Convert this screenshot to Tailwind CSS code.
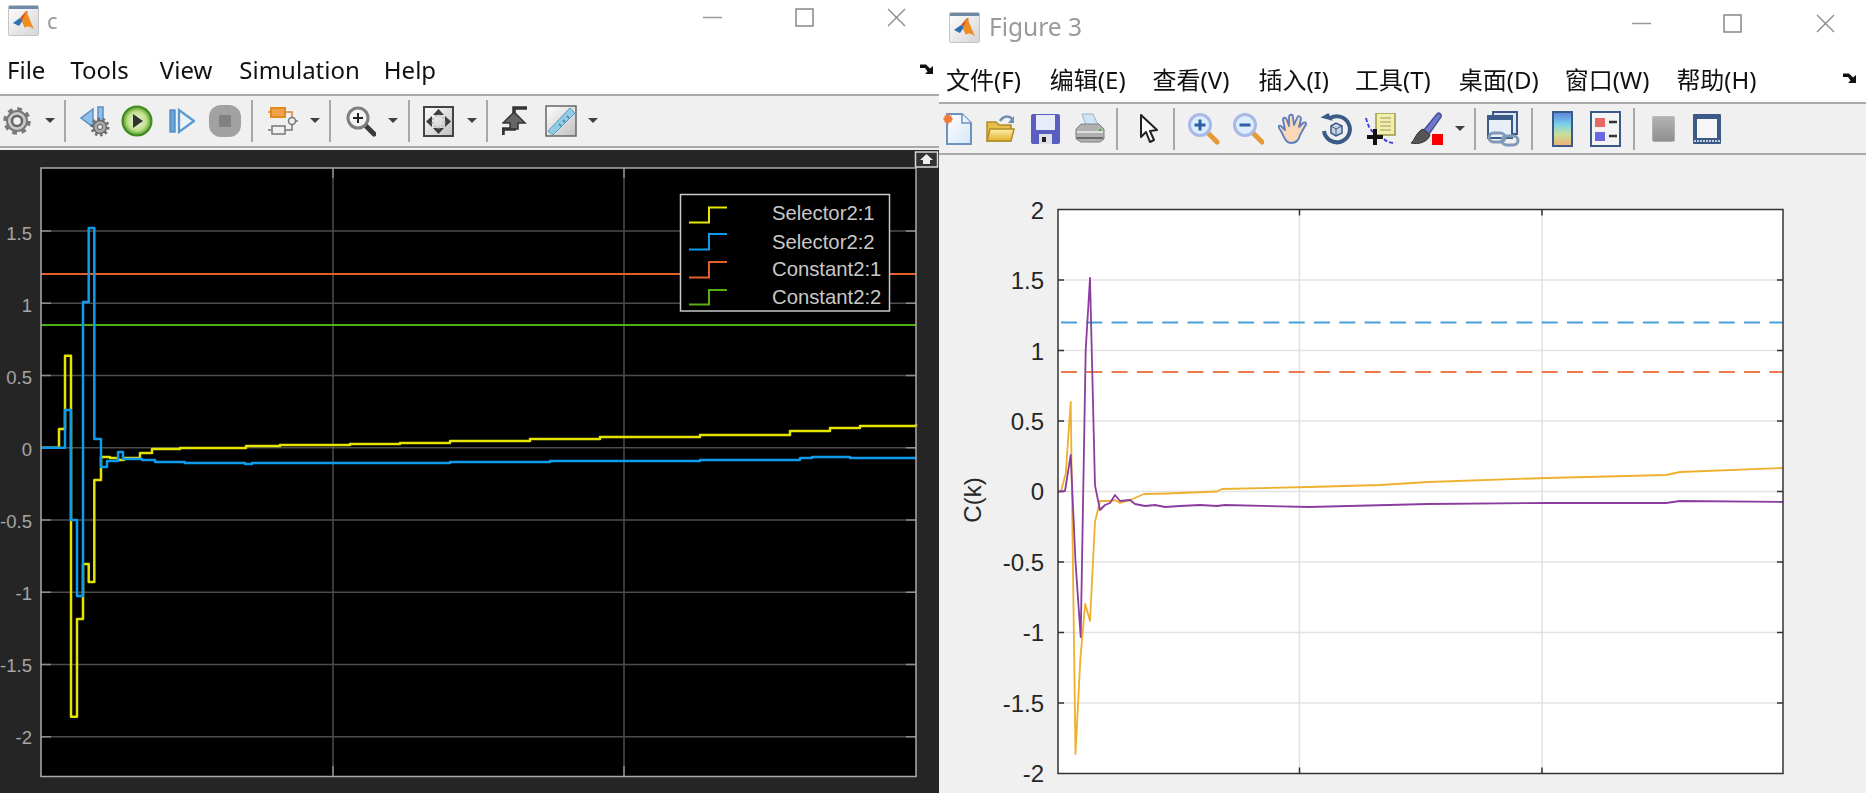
<!DOCTYPE html>
<html lang="en">
<head>
    <meta charset="UTF-8">
    <title>c / Figure 3</title>
    <script src="https://cdn.jsdelivr.net/npm/@tailwindcss/browser@4"></script>
</head>
<body class="bg-white overflow-hidden">
    <!-- shared icon parts -->
    <svg class="absolute w-0 h-0" aria-hidden="true">
        <defs>
            <linearGradient id="win" x1="0" y1="0" x2="1" y2="1"><stop offset="0" stop-color="#ffffff"/><stop offset="1" stop-color="#d4d4d4"/></linearGradient>
            <radialGradient id="green" cx=".5" cy=".5" r=".5"><stop offset="0" stop-color="#f2f8e0"/><stop offset=".65" stop-color="#bfe08a"/><stop offset="1" stop-color="#4f9a24"/></radialGradient>
            <linearGradient id="folder" x1="0" y1="0" x2="0" y2="1"><stop offset="0" stop-color="#fff3a8"/><stop offset="1" stop-color="#e0b030"/></linearGradient>
            <linearGradient id="page" x1="0" y1="0" x2="1" y2="1"><stop offset="0" stop-color="#ffffff"/><stop offset="1" stop-color="#d5e6f8"/></linearGradient>
            <linearGradient id="rainbow" x1="0" y1="0" x2="0" y2="1"><stop offset="0" stop-color="#5b7fe0"/><stop offset=".35" stop-color="#78d0e8"/><stop offset=".65" stop-color="#c8e0a0"/><stop offset="1" stop-color="#f0b070"/></linearGradient>
            <linearGradient id="box" x1="0" y1="0" x2="1" y2="1"><stop offset="0" stop-color="#ffffff"/><stop offset="1" stop-color="#c0c0c0"/></linearGradient>
            <linearGradient id="chip" x1="0" y1="0" x2="0" y2="1"><stop offset="0" stop-color="#b4b4b4"/><stop offset="1" stop-color="#8e8e8e"/></linearGradient>
            <symbol id="ml" viewBox="0 0 31 31">
                <rect x=".5" y=".5" width="30" height="30" rx="1" fill="url(#win)" stroke="#c4c4c4"/>
                <rect x="1" y="1" width="29" height="3" fill="#6f8aa6"/>
                <path d="M5 18 L12 13 L15 15 L11 21Z" fill="#2f6fb0"/>
                <path d="M12 13 L18 6 L20 7 L15 15Z" fill="#d9551d"/>
                <path d="M18 6 C21 11 23 19 26 24 C22 22 20 20 17 23 L14 17Z" fill="#ef8c22"/>
            </symbol>
            <symbol id="drop" viewBox="0 0 10 6"><path d="M0 0H10L5 5Z" fill="#404040"/></symbol>
            <symbol id="more" viewBox="0 0 15 12"><path d="M0 1.500H6L10 5.500L13 3V11H5L7.500 8.500L5 5H0Z" fill="#111"/></symbol>
            <symbol id="mag" viewBox="0 0 33 33">
                <path d="M20 20L30 30" stroke="#e59a3a" stroke-width="5" stroke-linecap="round"/>
                <circle cx="13" cy="13" r="10.500" fill="#dceefc" stroke="#a8b8e8" stroke-width="3"/>
                <path d="M7.500 13H18.500" stroke="#2f5fa8" stroke-width="3"/>
            </symbol>
        </defs>
    </svg>

    <div class="flex w-[1866px] h-[793px] overflow-hidden blur-[0.5px] font-[family-name:'Noto_Sans','Noto_Sans_CJK_SC',sans-serif]">
        <!-- scope window -->
        <div class="w-[939px] h-full flex flex-col">
            <div class="relative h-[46px] flex items-center pl-[8px] pb-[6px] shrink-0">
                <svg class="w-[31px] h-[31px]"><use href="#ml"/></svg>
                <span class="ml-[8px] text-[22px] text-[#9a9a9a]">c</span>
                <svg class="ml-auto mb-[6px] w-[19px] h-[19px]" viewBox="0 0 19 19"><path d="M0 9.500H19" stroke="#999" stroke-width="1.500"/></svg>
                <svg class="ml-[73px] mb-[6px] w-[19px] h-[19px]" viewBox="0 0 19 19"><rect x="1" y="1" width="17" height="17" fill="none" stroke="#888" stroke-width="1.500"/></svg>
                <svg class="ml-[73px] mr-[33px] mb-[6px] w-[19px] h-[19px]" viewBox="0 0 19 19"><path d="M1 1L18 18M18 1L1 18" stroke="#888" stroke-width="1.300"/></svg>
            </div>
            <div class="h-[48px] flex items-center pl-[7px] text-[24px] text-[#111] shrink-0">
                <span>File</span>
                <span class="ml-[25px]">Tools</span>
                <span class="ml-[31px]">View</span>
                <span class="ml-[27px]">Simulation</span>
                <span class="ml-[24px]">Help</span>
                <svg class="ml-auto mr-[4px] mb-[2px] w-[15px] h-[12px]"><use href="#more"/></svg>
            </div>
            <div class="h-[54px] flex items-center bg-[#f0f0f0] border-y-2 border-[#a9a9a9] shrink-0">
                <svg class="ml-[3px] w-[28px] h-[28px]" viewBox="0 0 28 28">
                    <circle cx="14" cy="14" r="12" fill="none" stroke="#7a7a7a" stroke-width="3.500" stroke-dasharray="4.700 4.700"/>
                    <circle cx="14" cy="14" r="10" fill="#c9c9c9" stroke="#777" stroke-width="2"/>
                    <circle cx="14" cy="14" r="5" fill="#f0f0f0" stroke="#666" stroke-width="2.500"/>
                </svg>
                <svg class="ml-[14px] w-[10px] h-[6px]"><use href="#drop"/></svg>
                <div class="ml-[9px] w-[2px] h-[42px] bg-[#a8a8a8]"></div>
                <svg class="ml-[14px] w-[30px] h-[32px]" viewBox="0 0 30 32">
                    <path d="M13 4V22L1 13Z" fill="#8fc0ea" stroke="#5c8fc4" stroke-width="1.500"/>
                    <rect x="18" y="2" width="5" height="16" fill="#8fc0ea" stroke="#5c8fc4" stroke-width="1.500"/>
                    <circle cx="20" cy="22" r="8" fill="none" stroke="#6c6c6c" stroke-width="3" stroke-dasharray="2.500 2.500"/>
                    <circle cx="20" cy="22" r="6.500" fill="#a8a8a8" stroke="#6c6c6c" stroke-width="1.500"/>
                    <circle cx="20" cy="22" r="2.500" fill="#eee" stroke="#555"/>
                </svg>
                <svg class="ml-[11px] w-[32px] h-[32px]" viewBox="0 0 32 32">
                    <circle cx="16" cy="16" r="14.500" fill="url(#green)" stroke="#3f8a1e" stroke-width="2"/>
                    <path d="M12 9L22 16L12 23Z" fill="#333"/>
                </svg>
                <svg class="ml-[16px] w-[26px] h-[26px]" viewBox="0 0 26 26">
                    <rect x="1" y="2" width="5" height="22" fill="#6aa4d8" stroke="#4d86bc" stroke-width="1.300"/>
                    <path d="M10 2V24L25 13Z" fill="#eaf3fb" stroke="#5b97cf" stroke-width="2.200"/>
                </svg>
                <svg class="ml-[14px] w-[32px] h-[32px]" viewBox="0 0 32 32">
                    <rect x="0" y="0" width="32" height="32" rx="12" fill="#a2a2a2"/>
                    <rect x="10" y="10" width="12" height="12" fill="#828282"/>
                </svg>
                <div class="ml-[10px] w-[2px] h-[42px] bg-[#a8a8a8]"></div>
                <svg class="ml-[15px] w-[30px] h-[30px]" viewBox="0 0 30 30">
                    <rect x="3" y="2" width="14" height="9" fill="#f0a248" stroke="#e08a20" stroke-width="2"/>
                    <path d="M17 6H24V12M0 6H3" stroke="#d8843a" stroke-width="1.500" fill="none"/>
                    <circle cx="24" cy="15" r="3.500" fill="#f0f0f0" stroke="#777" stroke-width="1.500"/>
                    <path d="M28 15H30M24 18V24H17M3 24H0" stroke="#777" stroke-width="1.500" fill="none"/>
                    <rect x="4" y="20" width="13" height="8" fill="#f0f0f0" stroke="#777" stroke-width="1.500"/>
                </svg>
                <svg class="ml-[12px] w-[10px] h-[6px]"><use href="#drop"/></svg>
                <div class="ml-[9px] w-[2px] h-[42px] bg-[#a8a8a8]"></div>
                <svg class="ml-[15px] w-[30px] h-[31px]" viewBox="0 0 30 31">
                    <path d="M19 19L28 28" stroke="#3a3a3a" stroke-width="5" stroke-linecap="round"/>
                    <circle cx="12" cy="12" r="10" fill="#f4f4f4" stroke="#7f7f7f" stroke-width="3"/>
                    <path d="M7 12H17M12 7V17" stroke="#222" stroke-width="2"/>
                </svg>
                <svg class="ml-[12px] w-[10px] h-[6px]"><use href="#drop"/></svg>
                <div class="ml-[10px] w-[2px] h-[42px] bg-[#a8a8a8]"></div>
                <svg class="ml-[13px] w-[31px] h-[31px]" viewBox="0 0 31 31">
                    <rect x="1" y="1" width="29" height="29" fill="url(#box)" stroke="#444" stroke-width="2"/>
                    <path d="M15.500 3L21 9H10ZM15.500 28L21 22H10ZM3 15.500L9 10V21ZM28 15.500L22 10V21Z" fill="#3c3c3c"/>
                    <circle cx="15.500" cy="15.500" r="6" fill="none" stroke="#bbb" stroke-width="2" stroke-dasharray="2 2"/>
                </svg>
                <svg class="ml-[13px] w-[10px] h-[6px]"><use href="#drop"/></svg>
                <div class="ml-[9px] w-[2px] h-[42px] bg-[#a8a8a8]"></div>
                <svg class="ml-[14px] w-[26px] h-[32px]" viewBox="0 0 26 32">
                    <path d="M1 30V24H12V18M12 10V3H25" fill="none" stroke="#333" stroke-width="3.500"/>
                    <path d="M12 7L23 18H16V24H8V18H1Z" fill="#666" stroke="#333" stroke-width="1.500"/>
                </svg>
                <svg class="ml-[17px] w-[32px] h-[32px]" viewBox="0 0 32 32">
                    <rect x="1" y="1" width="30" height="30" fill="url(#box)" stroke="#666" stroke-width="1.500"/>
                    <path d="M3 26L25 3L30 8L8 30Z" fill="#92cbe6" stroke="#5c9cc0"/>
                    <path d="M14 19L16 21M18 15L20 17M22 11L24 13" stroke="#3c7ca0" stroke-width="1.500"/>
                </svg>
                <svg class="ml-[11px] w-[10px] h-[6px]"><use href="#drop"/></svg>
            </div>
            <div class="h-[2px] bg-[#f0f0f0] shrink-0"></div>
            <svg class="w-[939px] h-[643px] shrink-0" viewBox="0 150 939 643" font-family="Liberation Sans, sans-serif">
                <rect x="0" y="150" width="939" height="643" fill="#252525"/>
                <rect x="41" y="168" width="875" height="608.500" fill="#000"/>
                <g stroke="#4c4c4c" stroke-width="1.500">
                    <path d="M41 231H916M41 303.200H916M41 375.400H916M41 447.700H916M41 520H916M41 592.200H916M41 664.400H916M41 736.700H916M333 168V776M624 168V776"/>
                </g>
                <path d="M41 231h10M41 303.200h10M41 375.400h10M41 447.700h10M41 520h10M41 592.200h10M41 664.400h10M41 736.700h10M906 231h10M906 303.200h10M906 375.400h10M906 447.700h10M906 520h10M906 592.200h10M906 664.400h10M906 736.700h10M333 168v10M624 168v10M333 766v10M624 766v10" stroke="#8c8c8c" stroke-width="1.500"/>
                <path d="M41 274H916" stroke="#e2602a" stroke-width="2"/>
                <path d="M41 325H916" stroke="#4fae10" stroke-width="2"/>
                <path d="M41 447.700H59V429H65V355.700H71V716.700H77V619H83V564H88.700V582H94.300V480H101V457H110V458H118V460H124V458H140V453H152V449H180V448H246V446H280V445H350V444H400V443H450V441H530V439H600V437H700V435H790V431H830V428H860V426H916V424" fill="none" stroke="#e4e400" stroke-width="2.500" stroke-linejoin="round"/>
                <path d="M41 447.700H65V410H71V520H77V596H83V302H88.700V228H94.300V439H101V467H107V461H118V452H123V459H142V460H155V462H185V463H245V464H252V463H450V462H550V461H700V460H800V458H812V457H850V458H916" fill="none" stroke="#0f9bec" stroke-width="2.500" stroke-linejoin="round"/>
                <rect x="41" y="168" width="875" height="608.500" fill="none" stroke="#ababab" stroke-width="1.500"/>
                <g fill="#a6a6a6" font-size="18.500" text-anchor="end">
                    <text x="32" y="240">1.5</text>
                    <text x="32" y="312">1</text>
                    <text x="32" y="384">0.5</text>
                    <text x="32" y="456">0</text>
                    <text x="32" y="528">-0.5</text>
                    <text x="32" y="600">-1</text>
                    <text x="32" y="672">-1.5</text>
                    <text x="32" y="744">-2</text>
                </g>
                <!-- legend -->
                <rect x="680.500" y="194.500" width="209" height="116.500" fill="#000" stroke="#c8c8c8" stroke-width="1.500"/>
                <path d="M689 222.500H709V207.500H727" fill="none" stroke="#e8e800" stroke-width="2"/>
                <path d="M689 249.500H709V234H727" fill="none" stroke="#0f9bec" stroke-width="2"/>
                <path d="M689 277.500H709V262H727" fill="none" stroke="#e2602a" stroke-width="2"/>
                <path d="M689 304.500H709V290H727" fill="none" stroke="#55b010" stroke-width="2"/>
                <g fill="#c8c8c8" font-size="20.300">
                    <text x="772" y="220">Selector2:1</text>
                    <text x="772" y="249">Selector2:2</text>
                    <text x="772" y="276">Constant2:1</text>
                    <text x="772" y="304">Constant2:2</text>
                </g>
                <!-- undock button -->
                <rect x="915.500" y="152" width="22" height="15" fill="#333" stroke="#d8d8d8" stroke-width="1.500"/>
                <path d="M926.500 154L933 160H930V164H923V160H920Z" fill="#eee"/>
            </svg>
        </div>

        <!-- figure window -->
        <div class="w-[927px] h-full flex flex-col">
            <div class="h-[54px] flex items-center pl-[10px] shrink-0">
                <svg class="w-[31px] h-[31px]"><use href="#ml"/></svg>
                <span class="ml-[9px] text-[24.500px] text-[#9a9a9a]">Figure 3</span>
                <svg class="ml-auto mb-[8px] w-[19px] h-[19px]" viewBox="0 0 19 19"><path d="M0 9.500H19" stroke="#999" stroke-width="1.500"/></svg>
                <svg class="ml-[72px] mb-[8px] w-[19px] h-[19px]" viewBox="0 0 19 19"><rect x="1" y="1" width="17" height="17" fill="none" stroke="#888" stroke-width="1.500"/></svg>
                <svg class="ml-[74px] mr-[31px] mb-[8px] w-[19px] h-[19px]" viewBox="0 0 19 19"><path d="M1 1L18 18M18 1L1 18" stroke="#888" stroke-width="1.300"/></svg>
            </div>
            <div class="h-[48px] flex items-center pl-[7px] pt-[3px] text-[24px] text-[#111] shrink-0">
                <span>文件(F)</span>
                <span class="ml-[29px]">编辑(E)</span>
                <span class="ml-[27px]">查看(V)</span>
                <span class="ml-[29px]">插入(I)</span>
                <span class="ml-[26px]">工具(T)</span>
                <span class="ml-[28px]">桌面(D)</span>
                <span class="ml-[26px]">窗口(W)</span>
                <span class="ml-[27px]">帮助(H)</span>
                <svg class="ml-auto mr-[8px] mb-[4px] w-[15px] h-[12px]"><use href="#more"/></svg>
            </div>
            <div class="h-[53px] flex items-center bg-[#f0f0f0] border-y-2 border-[#a9a9a9] shrink-0">
                <svg class="ml-[4px] w-[29px] h-[32px]" viewBox="0 0 29 32">
                    <path d="M4 1H19L28 10V31H4Z" fill="url(#page)" stroke="#6d92bd" stroke-width="2"/>
                    <path d="M19 1V10H28" fill="#e8f0fa" stroke="#6d92bd" stroke-width="1.500"/>
                    <circle cx="5" cy="6" r="4" fill="#f07a38"/>
                    <path d="M0 6H10M5 0V12M1.500 2.500L8.500 9.500M8.500 2.500L1.500 9.500" stroke="#f07a38"/>
                </svg>
                <svg class="ml-[13px] w-[30px] h-[30px]" viewBox="0 0 30 30">
                    <path d="M2 27V8H11L14 11H26V27Z" fill="#e6be48" stroke="#b08c28" stroke-width="1.500"/>
                    <path d="M2 27L5 15H29L26 27Z" fill="url(#folder)" stroke="#b08c28" stroke-width="1.500"/>
                    <path d="M15 7C18 2 24 1 27 5" fill="none" stroke="#6c8eb0" stroke-width="2.500"/>
                    <path d="M29 2V9H23Z" fill="#6c8eb0"/>
                </svg>
                <svg class="ml-[16px] w-[29px] h-[30px]" viewBox="0 0 29 30">
                    <rect x="0" y="0" width="29" height="30" rx="2" fill="#5a5ec0"/>
                    <rect x="5" y="1" width="19" height="15" fill="#e8ecfa"/>
                    <rect x="8" y="20" width="13" height="10" fill="#e0e0e8"/>
                    <rect x="11" y="23" width="4" height="5" fill="#222"/>
                </svg>
                <svg class="ml-[15px] w-[30px] h-[32px]" viewBox="0 0 30 32">
                    <path d="M7 1H18L23 12H11Z" fill="#cfe4f4" stroke="#9ab2c6"/>
                    <path d="M1 16L6 11H24L29 16V26L25 29H6L1 26Z" fill="#b0b0b0" stroke="#808080"/>
                    <path d="M2 19H28" stroke="#f0f0f0" stroke-width="1.500"/>
                    <path d="M2 25H28" stroke="#6c6c6c" stroke-width="2"/>
                    <rect x="24" y="16" width="2" height="2" fill="#40b040"/>
                </svg>
                <div class="ml-[11px] w-[2px] h-[42px] bg-[#a8a8a8]"></div>
                <svg class="ml-[22px] w-[18px] h-[30px]" viewBox="0 0 18 30">
                    <path d="M1 1V23L6 18L10 28L14 26L10 17L17 16Z" fill="#fff" stroke="#222" stroke-width="2" stroke-linejoin="round"/>
                </svg>
                <div class="ml-[15px] w-[2px] h-[42px] bg-[#a8a8a8]"></div>
                <svg class="ml-[12px] w-[33px] h-[33px]"><use href="#mag"/><path d="M13 7.500V18.500" stroke="#2f5fa8" stroke-width="3"/></svg>
                <svg class="ml-[12px] w-[32px] h-[33px]"><use href="#mag" width="33" height="33"/></svg>
                <svg class="ml-[13px] w-[31px] h-[31px]" viewBox="0 0 31 31">
                    <path d="M4 18C0 13 2 11 5 14L8 17L6 7C6 4 9 4 10 7L12 13L12 4C12 1 16 1 16 4L17 12L20 5C21 2 24 3 24 6L22 14L26 10C29 8 30 11 28 13L23 22C22 27 19 30 14 30C9 30 8 26 4 18Z" fill="#f8d8b8" stroke="#5a7ec0" stroke-width="1.800" stroke-linejoin="round"/>
                </svg>
                <svg class="ml-[12px] w-[32px] h-[32px]" viewBox="0 0 32 32">
                    <path d="M9 6A13 13 0 1 1 4 18" fill="none" stroke="#3c5a88" stroke-width="4"/>
                    <path d="M2 2H11V11Z" fill="#3c5a88" transform="rotate(-30 6 6)"/>
                    <path d="M11 13L16 10L22 13V20L16 23L11 20Z" fill="#c8d4e4" stroke="#3c5a88" stroke-width="1.500"/>
                    <path d="M11 13L16 16L22 13M16 16V23" fill="none" stroke="#3c5a88"/>
                </svg>
                <svg class="ml-[13px] w-[31px] h-[32px]" viewBox="0 0 31 32">
                    <rect x="11" y="0" width="19" height="22" fill="#f0eeb0" stroke="#9a9a40" stroke-width="1.500"/>
                    <path d="M15 5H26M15 9H26M15 13H26M15 17H26" stroke="#bcb870" stroke-width="1.500"/>
                    <path d="M1 5C3 13 5 16 8 19M19 26C22 29 26 30 29 30" fill="none" stroke="#3a3ae0" stroke-width="1.800" stroke-dasharray="4 2"/>
                    <path d="M10 16V32M2 24H18" stroke="#111" stroke-width="4"/>
                </svg>
                <svg class="ml-[14px] w-[35px] h-[33px]" viewBox="0 0 35 33">
                    <path d="M14 18L27 2C29 0 32 2 31 5L19 22Z" fill="#7078c8" stroke="#4a5098" stroke-width="1.500"/>
                    <path d="M13 17L20 23C18 30 8 33 1 31C5 28 6 20 13 17Z" fill="#555" stroke="#333"/>
                    <rect x="22" y="22" width="11" height="11" fill="#f40000"/>
                </svg>
                <svg class="ml-[10px] w-[10px] h-[6px]"><use href="#drop"/></svg>
                <div class="ml-[9px] w-[2px] h-[42px] bg-[#a8a8a8]"></div>
                <svg class="ml-[11px] w-[33px] h-[36px]" viewBox="0 0 33 36">
                    <rect x="6" y="1" width="24" height="22" fill="#dde6f2" stroke="#3c5a88" stroke-width="2"/>
                    <rect x="1" y="5" width="24" height="22" fill="#e8eef6" stroke="#3c5a88" stroke-width="2"/>
                    <rect x="1" y="5" width="24" height="4" fill="#3c5a88"/>
                    <rect x="2" y="22" width="16" height="9" rx="4.500" fill="none" stroke="#7e9ab8" stroke-width="3"/>
                    <rect x="15" y="25" width="16" height="9" rx="4.500" fill="none" stroke="#7e9ab8" stroke-width="3"/>
                </svg>
                <div class="ml-[11px] w-[2px] h-[42px] bg-[#a8a8a8]"></div>
                <svg class="ml-[19px] w-[21px] h-[36px]" viewBox="0 0 21 36">
                    <rect x="1" y="1" width="19" height="34" fill="url(#rainbow)" stroke="#3c5a88" stroke-width="2"/>
                </svg>
                <svg class="ml-[17px] w-[31px] h-[36px]" viewBox="0 0 31 36">
                    <rect x="1" y="1" width="29" height="34" fill="#f4f4f4" stroke="#3c5a88" stroke-width="2"/>
                    <rect x="5" y="7" width="10" height="9" fill="#e86868"/>
                    <rect x="5" y="21" width="10" height="9" fill="#6868e0"/>
                    <path d="M19 11H27M19 25H27" stroke="#333" stroke-width="2.500"/>
                </svg>
                <div class="ml-[12px] w-[2px] h-[42px] bg-[#a8a8a8]"></div>
                <svg class="ml-[17px] w-[23px] h-[26px]" viewBox="0 0 23 26">
                    <rect x="0" y="0" width="23" height="26" rx="3" fill="url(#chip)" stroke="#c4c4c4"/>
                </svg>
                <svg class="ml-[17px] w-[30px] h-[32px]" viewBox="0 0 30 32">
                    <rect x="1" y="1" width="28" height="30" rx="1" fill="#3c5a88"/>
                    <rect x="5" y="6" width="20" height="19" fill="#f6f6f6"/>
                    <path d="M2 28H28" stroke="#c4ccd8" stroke-width="2" stroke-dasharray="2 1"/>
                </svg>
            </div>
            <svg class="w-[927px] h-[638px] shrink-0 bg-[#f0f0f0]" viewBox="939 155 927 638" font-family="Liberation Sans, sans-serif">
                <rect x="1058" y="209.500" width="725" height="564" fill="#fff"/>
                <path d="M1058 280H1783M1058 350.500H1783M1058 421H1783M1058 491.500H1783M1058 562H1783M1058 632.500H1783M1058 703H1783M1299.500 209.500V773.500M1542 209.500V773.500" stroke="#e2e2e2" stroke-width="1.500"/>
                <path d="M1058 280h6M1058 350.500h6M1058 421h6M1058 491.500h6M1058 562h6M1058 632.500h6M1058 703h6M1777 280h6M1777 350.500h6M1777 421h6M1777 491.500h6M1777 562h6M1777 632.500h6M1777 703h6M1299.500 209.500v6M1542 209.500v6M1299.500 773.500v-6M1542 773.500v-6" stroke="#333" stroke-width="1.500"/>
                <path d="M1061 322.500H1783" stroke="#4b9fd8" stroke-width="2" stroke-dasharray="16 9.300"/>
                <path d="M1061 372H1783" stroke="#ec7a4a" stroke-width="2" stroke-dasharray="16 9.300"/>
                <polyline fill="none" stroke="#eeb02e" stroke-width="1.800" stroke-linejoin="round" points="1058,491.500 1061,491.500 1065.800,473 1070.700,402 1075.500,754 1080.400,658 1085.200,604 1090,621 1095,522 1100,501 1110,501 1115,500 1120,503 1130,500 1137,497 1144,494 1167,493.500 1217,491.500 1222,489 1309,487 1380,485 1428,482 1547,478 1666,475 1680,472 1783,468"/>
                <polyline fill="none" stroke="#8a3d9e" stroke-width="1.800" stroke-linejoin="round" points="1058,491.500 1065,491 1070.700,455 1075.500,562 1080.700,637 1085.700,350 1090,278 1095,485.500 1100,510 1105,505 1110,503 1115,495 1120,501 1130,500 1135,504 1145,506 1155,505 1165,507 1180,506 1200,505 1217,506 1225,505 1309,507 1428,504 1547,503 1666,503 1680,501 1783,502"/>
                <rect x="1058" y="209.500" width="725" height="564" fill="none" stroke="#333" stroke-width="1.500"/>
                <g fill="#262626" font-size="24" text-anchor="end">
                    <text x="1044" y="219">2</text>
                    <text x="1044" y="289">1.5</text>
                    <text x="1044" y="360">1</text>
                    <text x="1044" y="430">0.5</text>
                    <text x="1044" y="500">0</text>
                    <text x="1044" y="571">-0.5</text>
                    <text x="1044" y="641">-1</text>
                    <text x="1044" y="712">-1.5</text>
                    <text x="1044" y="782">-2</text>
                </g>
                <text x="981" y="500" fill="#262626" font-size="24" text-anchor="middle" transform="rotate(-90 981 500)">C(k)</text>
            </svg>
        </div>
    </div>
</body>
</html>
